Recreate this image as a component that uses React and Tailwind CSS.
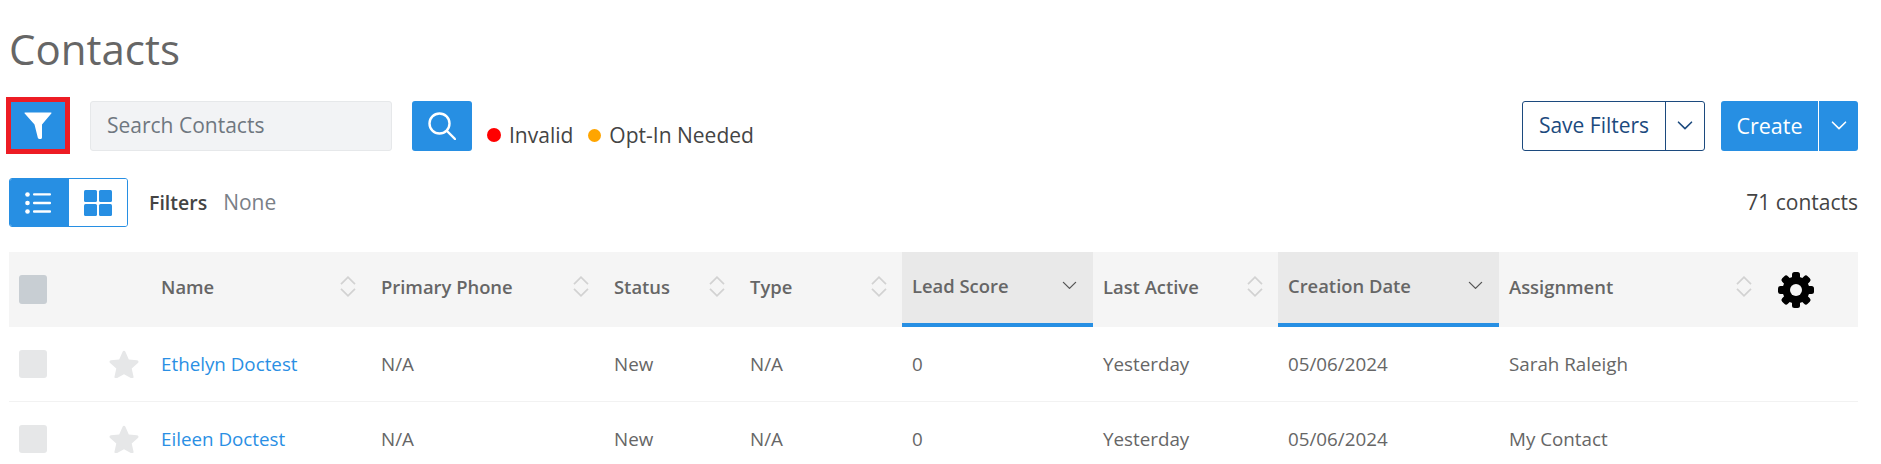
import React from "react";

const Chevron = ({ className = "", w = 16, h = 9, color = "currentColor", sw = 1.6 }) => (
  <svg width={w} height={h} viewBox="0 0 16 9" className={className} fill="none" stroke={color} strokeWidth={sw} strokeLinecap="round" strokeLinejoin="round">
    <path d="M1.5 1.2 8 7.6l6.5-6.4" />
  </svg>
);

const Sort = () => (
  <svg width="16" height="21" viewBox="0 0 16 21" fill="none" stroke="#d2d2d2" strokeWidth="1.7" className="shrink-0">
    <path d="M1 8.2 8 1.2l7 7" />
    <path d="M1 12.8l7 7 7-7" />
  </svg>
);

const Star = () => (
  <svg width="30" height="28" viewBox="0 0 30 28" className="block">
    <path
      d="M15 .8c.7 0 1.200.4 1.500 1.100l3.300 7.600 8.200.8c1.500.2 2 1.800.9 2.800l-6.200 5.400 1.800 8c.3 1.400-1.100 2.400-2.300 1.700L15 24.300 7.800 28.200c-1.200.7-2.600-.3-2.300-1.700l1.800-8-6.200-5.400c-1.100-1-.6-2.600.9-2.800l8.200-.8 3.300-7.600c.3-.7.800-1.100 1.500-1.100z"
      fill="#e6e7e8"
    />
  </svg>
);

const Gear = () => (
  <svg width="36" height="36" viewBox="0 0 36 36" className="block">
    <circle cx="18" cy="18" r="13.5" fill="#000" />
    {[0, 45, 90, 135, 180, 225, 270, 315].map((a) => (
      <rect key={a} x="14" y="0" width="8" height="8" rx="2.5" fill="#000" transform={`rotate(${a} 18 18)`} />
    ))}
    <circle cx="18" cy="18" r="6" fill="#f5f5f5" />
  </svg>
);

const columns = [
  { name: "Name", col: "w-[220px]" },
  { name: "Primary Phone", col: "w-[233px]" },
  { name: "Status", col: "w-[136px]" },
  { name: "Type", col: "w-[162px]" },
  { name: "Lead Score", col: "w-[191px]", active: true },
  { name: "Last Active", col: "w-[185px]" },
  { name: "Creation Date", col: "w-[221px]", active: true },
  { name: "Assignment", col: "w-[268px]" },
];

const rows = [
  ["Ethelyn Doctest", "N/A", "New", "N/A", "0", "Yesterday", "05/06/2024", "Sarah Raleigh"],
  ["Eileen Doctest", "N/A", "New", "N/A", "0", "Yesterday", "05/06/2024", "My Contact"],
];

export default function App() {
  return (
    <div className="h-[464px] overflow-hidden bg-white text-[#666] font-['Open_Sans',sans-serif]">
      <h1 className="h-[97px] pl-[9px] pt-[20px] text-[42px] leading-[57px] font-normal text-[#666]">Contacts</h1>

      <div className="flex h-[57px] items-center pl-[6px] pr-[23px]">
        <div className="h-[57px] w-[64px] shrink-0 border-[5px] border-[#ed1c24] bg-[#278fe3] flex items-center justify-center">
          <svg width="28" height="28" viewBox="0 0 28 28" fill="#fff">
            <path d="M1.200.5h25.600c.6 0 .9.6.5 1.100L18 12.500v12.700c0 1-.6 1.800-1.400 1.800h-1.200c-.6 0-1.100-.4-1.500-1L10.500 12.500.7 1.600C.3 1.100.6.500 1.200.5z" />
          </svg>
        </div>
        <div className="ml-[20px] flex h-[50px] w-[302px] items-center rounded-[3px] border border-[#e6e8ea] bg-[#f2f3f5] pl-[16px] pt-px text-[21px] text-[#6f7780]">
          Search Contacts
        </div>
        <button className="ml-[20px] flex h-[50px] w-[60px] items-center justify-center rounded-[3px] bg-[#278fe3]">
          <svg width="28" height="28" viewBox="0 0 28 28" fill="none" stroke="#fff" strokeWidth="2.4" strokeLinecap="round">
            <circle cx="11.500" cy="11.500" r="10" />
            <path d="M19 19l8 8" />
          </svg>
        </button>
        <div className="ml-[15px] mt-[19px] flex items-center text-[21px] leading-[27px] text-[#444]">
          <span className="h-[14px] w-[14px] rounded-full bg-[#ff0000]" />
          <span className="ml-[8px]">Invalid</span>
          <span className="ml-[15px] h-[13px] w-[13px] rounded-full bg-[#ffa500]" />
          <span className="ml-[8px]">Opt-In Needed</span>
        </div>
        <div className="ml-auto flex h-[50px] w-[183px] items-stretch rounded-[3px] border border-[#1c4a7e] text-[#1c4a7e]">
          <span className="flex flex-1 items-center justify-center border-r border-[#1c4a7e] pt-px text-[21px]">Save Filters</span>
          <span className="flex w-[38px] items-center justify-center">
            <Chevron color="#1c4a7e" />
          </span>
        </div>
        <div className="ml-[16px] flex h-[50px] w-[137px] items-stretch rounded-[3px] bg-[#278fe3] text-white">
          <span className="flex flex-1 items-center justify-center border-r border-white pt-px text-[21.500px]">Create</span>
          <span className="flex w-[39px] items-center justify-center">
            <Chevron color="#fff" />
          </span>
        </div>
      </div>

      <div className="mt-[24px] flex h-[49px] items-center pl-[9px] pr-[23px]">
        <div className="flex h-[49px] w-[119px] overflow-hidden rounded-[3px] border border-[#278fe3]">
          <span className="flex w-[59px] items-center justify-center bg-[#278fe3] pr-[3px]">
            <svg width="26" height="22" viewBox="0 0 26 22" fill="#fff">
              <circle cx="2.500" cy="2.500" r="2.300" />
              <circle cx="2.500" cy="11" r="2.300" />
              <circle cx="2.500" cy="19.500" r="2.300" />
              <rect x="8" y="1.200" width="18" height="2.400" rx="1" />
              <rect x="8" y="9.800" width="18" height="2.400" rx="1" />
              <rect x="8" y="18.300" width="18" height="2.400" rx="1" />
            </svg>
          </span>
          <span className="flex flex-1 items-center justify-center bg-white pr-px">
            <svg width="28" height="26" viewBox="0 0 28 26" fill="#278fe3">
              <rect x="0" y="0" width="13" height="12" rx="1.500" />
              <rect x="15" y="0" width="13" height="12" rx="1.500" />
              <rect x="0" y="14" width="13" height="12" rx="1.500" />
              <rect x="15" y="14" width="13" height="12" rx="1.500" />
            </svg>
          </span>
        </div>
        <span className="ml-[21px] text-[19.500px] font-semibold text-[#444]">Filters</span>
        <span className="ml-[16px] text-[21px] text-[#7a8087]">None</span>
        <span className="ml-auto text-[21px] text-[#444]">71 contacts</span>
      </div>

      <div className="mt-[25px] pl-[9px] pr-[23px]">
        <table className="w-[1849px] table-fixed border-separate border-spacing-0 text-left">
          <colgroup>
            <col className="w-[91px]" />
            <col className="w-[51px]" />
            {columns.map((c) => (
              <col key={c.name} className={c.col} />
            ))}
            <col className="w-[91px]" />
          </colgroup>
          <thead>
            <tr className="h-[75px] bg-[#f5f5f5]">
              <th className="pl-[10px] align-middle">
                <span className="block h-[29px] w-[28px] rounded-[3px] bg-[#c8ced3]" />
              </th>
              <th />
              {columns.map((c, i) => (
                <th
                  key={c.name}
                  className={
                    c.active
                      ? "border-b-4 border-[#278fe3] bg-[#e9e9e9] pb-[3px] pl-[10px] pr-[16px] align-middle"
                      : "pb-[5px] pl-[10px] pr-[15px] align-middle"
                  }
                >
                  <div className="flex items-center justify-between text-[18.400px] font-semibold text-[#666]">
                    <span>{c.name}</span>
                    {c.active ? <Chevron w={15} h={9} color="#555" sw={1.4} /> : <Sort />}
                  </div>
                </th>
              ))}
              <th className="pl-[11px] align-middle">
                <Gear />
              </th>
            </tr>
          </thead>
          <tbody>
            {rows.map((r) => (
              <tr key={r[0]} className="h-[75px] text-[18.800px] text-[#666]">
                <td className="border-b border-[#f2f2f2] pl-[10px] align-middle">
                  <span className="block h-[28px] w-[28px] rounded-[3px] bg-[#e6e7e8]" />
                </td>
                <td className="border-b border-[#f2f2f2] align-middle">
                  <span className="block pl-[9px]">
                    <Star />
                  </span>
                </td>
                <td className="border-b border-[#f2f2f2] pl-[10px] align-middle text-[#2a8fe4]">{r[0]}</td>
                {r.slice(1).map((v, i) => (
                  <td key={i} className="border-b border-[#f2f2f2] pl-[10px] align-middle">
                    {v}
                  </td>
                ))}
                <td className="border-b border-[#f2f2f2]" />
              </tr>
            ))}
          </tbody>
        </table>
      </div>
    </div>
  );
}
